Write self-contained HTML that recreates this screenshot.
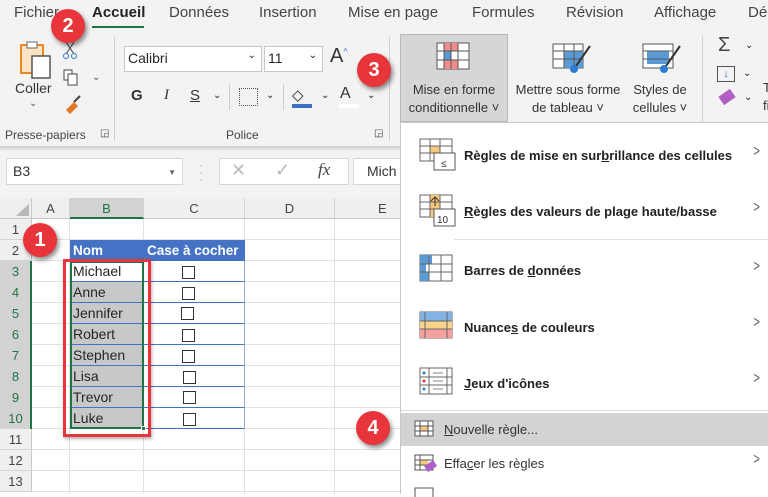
<!DOCTYPE html>
<html><head><meta charset="utf-8"><style>
*{margin:0;padding:0;box-sizing:border-box}
body{width:768px;height:494px;overflow:hidden;background:#fff;font-family:"Liberation Sans",sans-serif;position:relative;color:#262626}
.a{position:absolute}
.tab{position:absolute;top:4px;font-size:15px;color:#444}
.rib{position:absolute;left:0;top:28px;width:768px;height:118px;background:#f3f3f3}
.lbl{position:absolute;font-size:12px;color:#444}
.badge{position:absolute;width:34px;height:34px;border-radius:50%;background:#e8343b;color:#fff;font-weight:bold;font-size:20px;text-align:center;line-height:34px;box-shadow:2px 3px 5px rgba(0,0,0,.45)}
.ch{position:absolute;top:198px;height:21px;background:#efefef;border-right:1px solid #d4d4d4;border-bottom:1px solid #c8c8c8;font-size:13px;color:#444;text-align:center;line-height:21px}
.rh{position:absolute;left:0;width:32px;height:21px;background:#efefef;border-bottom:1px solid #d4d4d4;border-right:1px solid #c8c8c8;font-size:13px;color:#444;text-align:center;line-height:21px}
.cell{position:absolute;height:21px;font-size:14px;line-height:21px;padding-left:3px}
.cb{position:absolute;width:13px;height:13px;border:1px solid #333;background:#fff}
.mi{position:absolute;left:464px;font-size:13px;font-weight:bold;color:#222}
.arr{position:absolute;left:752px;font-size:16px;color:#666;transform:scaleX(.7)}
</style></head><body>
<div class="a" style="left:0;top:0;width:768px;height:28px;background:#f3f3f3"></div>
<div class="tab" style="left:14px">Fichier</div>
<div class="tab" style="left:92px;color:#222;font-weight:bold">Accueil</div>
<div class="a" style="left:92px;top:26px;width:52px;height:3px;background:#217346"></div>
<div class="tab" style="left:169px">Données</div>
<div class="tab" style="left:259px">Insertion</div>
<div class="tab" style="left:348px">Mise en page</div>
<div class="tab" style="left:472px">Formules</div>
<div class="tab" style="left:566px">Révision</div>
<div class="tab" style="left:654px">Affichage</div>
<div class="tab" style="left:748px">Dé</div>

<div class="rib"></div>
<div class="a" style="left:0;top:146px;width:768px;height:4px;background:linear-gradient(#ccc,#e8e8e8)"></div>
<svg class="a" style="left:18px;top:40px" width="38" height="40"><rect x="3" y="5" width="22" height="28" fill="#fbe3c4" stroke="#e48b26" stroke-width="2"/><rect x="9" y="2" width="10" height="6" fill="#fff" stroke="#666"/><rect x="14" y="16" width="18" height="22" fill="#fff" stroke="#555" stroke-width="1.5"/></svg>
<div class="a" style="left:15px;top:80px;font-size:14px;color:#333">Coller</div>
<div class="a" style="left:29px;top:98px;font-size:10px;color:#555">⌄</div>
<svg class="a" style="left:60px;top:40px" width="30" height="80"><path d="M6 2 L14 14 M14 2 L6 14" stroke="#444" fill="none"/><circle cx="6" cy="16" r="2.5" stroke="#2b7cd3" fill="none"/><circle cx="14" cy="16" r="2.5" stroke="#2b7cd3" fill="none"/><rect x="4" y="30" width="8" height="10" fill="#fff" stroke="#444"/><rect x="8" y="34" width="9" height="11" fill="#fff" stroke="#444"/><path d="M6 70 L14 62 L18 66 L10 74Z" fill="#e87722"/><path d="M14 62 L20 56" stroke="#444" stroke-width="2"/></svg>
<div class="a" style="left:92px;top:72px;font-size:10px;color:#555">⌄</div>
<div class="lbl" style="left:5px;top:128px">Presse-papiers</div>
<div class="lbl" style="left:100px;top:128px;font-size:10px">◲</div>
<div class="a" style="left:114px;top:36px;width:1px;height:105px;background:#d0d0d0"></div>
<div class="a" style="left:124px;top:46px;width:138px;height:26px;background:#fff;border:1px solid #c8c8c8;font-size:14px;padding:3px 3px">Calibri<span style="position:absolute;right:5px;font-size:10px">⌄</span></div>
<div class="a" style="left:264px;top:46px;width:59px;height:26px;background:#fff;border:1px solid #c8c8c8;font-size:14px;padding:3px 3px">11<span style="position:absolute;right:5px;font-size:10px">⌄</span></div>
<div class="a" style="left:330px;top:45px;font-size:20px;color:#333">A<sup style="font-size:9px;color:#2b7cd3">^</sup></div>
<div class="a" style="left:131px;top:87px;font-size:15px;font-weight:bold;color:#333">G</div>
<div class="a" style="left:164px;top:87px;font-size:15px;font-style:italic;font-family:'Liberation Serif';color:#333">I</div>
<div class="a" style="left:190px;top:87px;font-size:15px;text-decoration:underline;color:#333">S</div>
<div class="a" style="left:213px;top:90px;font-size:10px">⌄</div>
<div class="a" style="left:229px;top:84px;width:1px;height:26px;background:#ccc"></div>
<div class="a" style="left:239px;top:88px;width:19px;height:18px;border:1px dotted #555"></div>
<div class="a" style="left:266px;top:90px;font-size:10px">⌄</div>
<div class="a" style="left:283px;top:84px;width:1px;height:26px;background:#ccc"></div>
<div class="a" style="left:292px;top:86px;font-size:15px">◇</div>
<div class="a" style="left:292px;top:104px;width:20px;height:4px;background:#3b6fc4"></div>
<div class="a" style="left:321px;top:90px;font-size:10px">⌄</div>
<div class="a" style="left:340px;top:85px;font-size:16px;color:#333">A</div>
<div class="a" style="left:339px;top:104px;width:20px;height:4px;background:#fff"></div>
<div class="a" style="left:367px;top:90px;font-size:10px">⌄</div>
<div class="lbl" style="left:226px;top:128px">Police</div>
<div class="lbl" style="left:374px;top:128px;font-size:10px">◲</div>
<div class="a" style="left:389px;top:36px;width:1px;height:105px;background:#d0d0d0"></div>
<div class="a" style="left:400px;top:34px;width:108px;height:88px;background:#d6d6d6;border:1px solid #b8b8b8"></div>
<svg class="a" style="left:436px;top:42px" width="36" height="30"><rect x="1" y="1" width="32" height="26" fill="#fff" stroke="#555"/><rect x="8" y="1" width="14" height="8" fill="#f28b8b"/><rect x="8" y="9" width="7" height="9" fill="#5b9bd5"/><rect x="8" y="18" width="14" height="9" fill="#f28b8b"/><path d="M1 9H33M1 18H33M8 1V27M15 1V27M22 1V27" stroke="#555" fill="none"/></svg>
<div class="a" style="left:403px;top:81px;width:102px;text-align:center;font-size:13px;color:#333;line-height:18px">Mise en forme<br>conditionnelle ˅</div>
<svg class="a" style="left:552px;top:42px" width="40" height="34"><rect x="1" y="2" width="30" height="24" fill="#fff" stroke="#555"/><rect x="12" y="9" width="19" height="17" fill="#5b9bd5"/><path d="M1 9H31M1 17H31M12 2V26M22 2V26" stroke="#555" fill="none"/><path d="M38 4 L24 24" stroke="#333" stroke-width="2"/><circle cx="22" cy="27" r="4" fill="#2b7cd3"/></svg>
<div class="a" style="left:508px;top:81px;width:120px;text-align:center;font-size:13px;color:#333;line-height:18px">Mettre sous forme<br>de tableau ˅</div>
<svg class="a" style="left:642px;top:42px" width="40" height="34"><rect x="1" y="2" width="30" height="24" fill="#fff" stroke="#555"/><rect x="5" y="9" width="22" height="13" fill="#5b9bd5"/><path d="M1 9H31M1 17H31" stroke="#555" fill="none"/><path d="M38 4 L24 24" stroke="#333" stroke-width="2"/><circle cx="22" cy="27" r="4" fill="#2b7cd3"/></svg>
<div class="a" style="left:630px;top:81px;width:60px;text-align:center;font-size:13px;color:#333;line-height:18px">Styles de<br>cellules ˅</div>
<div class="a" style="left:702px;top:36px;width:1px;height:86px;background:#d0d0d0"></div>
<div class="a" style="left:718px;top:34px;font-size:20px;color:#444">Σ</div>
<div class="a" style="left:745px;top:40px;font-size:10px">⌄</div>
<div class="a" style="left:717px;top:66px;width:18px;height:16px;border:1.5px solid #555;color:#2b7cd3;font-size:11px;text-align:center;line-height:14px">↓</div>
<div class="a" style="left:743px;top:68px;font-size:10px">⌄</div>
<div class="a" style="left:720px;top:92px;width:14px;height:10px;background:#b25ec7;transform:rotate(-35deg)"></div>
<div class="a" style="left:744px;top:92px;font-size:10px">⌄</div>
<div class="a" style="left:763px;top:80px;font-size:13px;color:#333">T</div>
<div class="a" style="left:763px;top:98px;font-size:13px;color:#333">fi</div>

<div class="a" style="left:0;top:150px;width:768px;height:48px;background:#f3f3f3"></div>
<div class="a" style="left:6px;top:158px;width:177px;height:27px;background:#fff;border:1px solid #d6d6d6;font-size:14px;padding:4px 6px;color:#333">B3<span style="position:absolute;right:6px;font-size:8px;color:#666;top:9px">▼</span></div>
<div class="a" style="left:199px;top:162px;font-size:12px;color:#aaa;line-height:7px">·<br>·<br>·</div>
<div class="a" style="left:219px;top:158px;width:130px;height:27px;background:#fff;border:1px solid #d6d6d6"></div>
<div class="a" style="left:231px;top:160px;font-size:18px;color:#bbb">✕</div>
<div class="a" style="left:275px;top:160px;font-size:18px;color:#bbb">✓</div>
<div class="a" style="left:318px;top:160px;font-size:17px;font-style:italic;font-family:'Liberation Serif';color:#444">fx</div>
<div class="a" style="left:353px;top:158px;width:60px;height:27px;background:#fff;border:1px solid #d6d6d6;font-size:14px;padding:4px 13px;color:#333">Mich</div>

<div class="a" style="left:0;top:198px;width:32px;height:21px;background:#efefef;border-right:1px solid #c8c8c8;border-bottom:1px solid #c8c8c8"></div>
<svg class="a" style="left:14px;top:203px" width="16" height="14"><path d="M15 1V13H2Z" fill="#b8b8b8"/></svg>
<div class="ch" style="left:32px;width:38px">A</div>
<div class="ch" style="left:70px;width:74px;background:#d2d2d2;color:#217346;border-bottom:2px solid #217346">B</div>
<div class="ch" style="left:144px;width:101px">C</div>
<div class="ch" style="left:245px;width:90px">D</div>
<div class="ch" style="left:335px;width:433px;text-align:left;padding-left:43px">E</div>
<div class="a" style="left:32px;top:219px;width:736px;height:275px;background:repeating-linear-gradient(to bottom,transparent 0 20px,#e1e1e1 20px 21px)"></div>
<div class="a" style="left:69px;top:219px;width:1px;height:275px;background:#e1e1e1"></div>
<div class="a" style="left:143px;top:219px;width:1px;height:275px;background:#e1e1e1"></div>
<div class="a" style="left:244px;top:219px;width:1px;height:275px;background:#e1e1e1"></div>
<div class="a" style="left:334px;top:219px;width:1px;height:275px;background:#e1e1e1"></div>
<div class="rh" style="top:219px">1</div>
<div class="rh" style="top:240px">2</div>
<div class="rh" style="top:261px;background:#d2d2d2;color:#217346">3</div>
<div class="rh" style="top:282px;background:#d2d2d2;color:#217346">4</div>
<div class="rh" style="top:303px;background:#d2d2d2;color:#217346">5</div>
<div class="rh" style="top:324px;background:#d2d2d2;color:#217346">6</div>
<div class="rh" style="top:345px;background:#d2d2d2;color:#217346">7</div>
<div class="rh" style="top:366px;background:#d2d2d2;color:#217346">8</div>
<div class="rh" style="top:387px;background:#d2d2d2;color:#217346">9</div>
<div class="rh" style="top:408px;background:#d2d2d2;color:#217346">10</div>
<div class="rh" style="top:429px">11</div>
<div class="rh" style="top:450px">12</div>
<div class="rh" style="top:471px">13</div>
<div class="a" style="left:30px;top:261px;width:2px;height:168px;background:#217346"></div>
<div class="cell" style="left:70px;top:240px;width:175px;background:#4472c4;color:#fff;font-weight:bold;font-size:13.5px">Nom<span style="position:absolute;left:77px">Case à cocher</span></div>
<div class="a" style="left:70px;top:261px;width:175px;height:168px;background:repeating-linear-gradient(to bottom,transparent 0 20px,#4472c4 20px 21px);border-right:1px solid #8eaadb"></div>
<div class="a" style="left:70px;top:282px;width:74px;height:147px;background:repeating-linear-gradient(to bottom,#c8c8c8 0 20px,#4472c4 20px 21px)"></div>
<div class="cell" style="left:70px;top:261px">Michael</div>
<div class="cell" style="left:70px;top:282px">Anne</div>
<div class="cell" style="left:70px;top:303px">Jennifer</div>
<div class="cell" style="left:70px;top:324px">Robert</div>
<div class="cell" style="left:70px;top:345px">Stephen</div>
<div class="cell" style="left:70px;top:366px">Lisa</div>
<div class="cell" style="left:70px;top:387px">Trevor</div>
<div class="cell" style="left:70px;top:408px">Luke</div>
<div class="a" style="left:70px;top:261px;width:74px;height:168px;border:2px solid #217346"></div>
<div class="a" style="left:141px;top:426px;width:5px;height:5px;background:#217346;border:1px solid #fff"></div>
<div class="a" style="left:63px;top:259px;width:88px;height:178px;border:3px solid #e8343b;box-shadow:1px 2px 3px rgba(0,0,0,.3)"></div>
<div class="cb" style="left:182px;top:266px"></div>
<div class="cb" style="left:182px;top:287px"></div>
<div class="cb" style="left:181px;top:307px"></div>
<div class="cb" style="left:182px;top:329px"></div>
<div class="cb" style="left:182px;top:350px"></div>
<div class="cb" style="left:183px;top:371px"></div>
<div class="cb" style="left:183px;top:391px"></div>
<div class="cb" style="left:183px;top:413px"></div>

<div class="a" style="left:400px;top:122px;width:368px;height:372px;background:#fff;border-left:1px solid #c8c8c8;border-top:1px solid #c8c8c8"></div>
<svg class="a" style="left:419px;top:138px" width="40" height="34"><rect x="1" y="1" width="32" height="22" fill="#fff" stroke="#666"/><rect x="11" y="8" width="10" height="7" fill="#f7c77c"/><path d="M1 8H33M1 15H33M11 1V23M21 1V23" stroke="#666" fill="none"/><rect x="15" y="15" width="21" height="17" fill="#fff" stroke="#555"/><text x="22" y="29" font-size="10" fill="#333" font-family="Liberation Sans">≤</text></svg>
<div class="mi" style="top:148px">Règles de mise en sur<u>b</u>rillance des cellules</div>
<div class="arr" style="top:143px">&gt;</div>
<svg class="a" style="left:419px;top:194px" width="40" height="34"><rect x="1" y="1" width="32" height="22" fill="#fff" stroke="#666"/><rect x="11" y="1" width="10" height="22" fill="#f7c77c"/><path d="M1 8H33M1 15H33M11 1V23M21 1V23" stroke="#666" fill="none"/><path d="M16 12V3M12 7L16 3L20 7" stroke="#333" fill="none"/><rect x="15" y="15" width="21" height="17" fill="#fff" stroke="#555"/><text x="18" y="29" font-size="10" fill="#333" font-family="Liberation Sans">10</text></svg>
<div class="mi" style="top:204px"><u>R</u>ègles des valeurs de plage haute/basse</div>
<div class="arr" style="top:199px">&gt;</div>
<div class="a" style="left:454px;top:239px;width:314px;height:1px;background:#e0e0e0"></div>
<svg class="a" style="left:419px;top:254px" width="40" height="30"><rect x="1" y="1" width="32" height="26" fill="#fff" stroke="#666"/><rect x="1" y="1" width="12" height="9" fill="#5b9bd5"/><rect x="1" y="10" width="6" height="8" fill="#5b9bd5"/><rect x="1" y="18" width="9" height="9" fill="#5b9bd5"/><path d="M1 10H33M1 18H33M10 1V27M22 1V27" stroke="#666" fill="none"/></svg>
<div class="mi" style="top:263px">Barres de <u>d</u>onnées</div>
<div class="arr" style="top:258px">&gt;</div>
<svg class="a" style="left:419px;top:311px" width="40" height="30"><rect x="1" y="1" width="32" height="26" fill="#fff" stroke="#666"/><rect x="1" y="1" width="32" height="9" fill="#82b3e4"/><rect x="1" y="10" width="32" height="8" fill="#f9d58a"/><rect x="1" y="18" width="32" height="9" fill="#f4a0a0"/><path d="M1 10H33M1 18H33M6 1V27M28 1V27" stroke="#666" fill="none"/></svg>
<div class="mi" style="top:320px">Nuance<u>s</u> de couleurs</div>
<div class="arr" style="top:314px">&gt;</div>
<svg class="a" style="left:419px;top:367px" width="40" height="30"><rect x="1" y="1" width="32" height="26" fill="#fff" stroke="#666"/><path d="M1 10H33M1 18H33M10 1V27M28 1V27" stroke="#666" fill="none"/><circle cx="5" cy="6" r="1.5" fill="#2b7cd3"/><circle cx="5" cy="14" r="1.5" fill="#e8343b"/><circle cx="5" cy="22" r="1.5" fill="#2b7cd3"/><path d="M14 6H24M14 14H24M14 22H24" stroke="#888"/></svg>
<div class="mi" style="top:376px"><u>J</u>eux d'icônes</div>
<div class="arr" style="top:370px">&gt;</div>
<div class="a" style="left:401px;top:410px;width:367px;height:1px;background:#d8d8d8"></div>
<div class="a" style="left:401px;top:413px;width:367px;height:33px;background:#d3d3d3"></div>
<svg class="a" style="left:414px;top:420px" width="22" height="18"><rect x="1" y="1" width="18" height="15" fill="#fff" stroke="#555"/><rect x="6" y="6" width="8" height="5" fill="#f7c77c"/><path d="M1 6H19M1 11H19M6 1V16M14 1V16" stroke="#555" fill="none"/></svg>
<div class="a" style="left:444px;top:422px;font-size:13px;color:#333"><u>N</u>ouvelle règle...</div>
<svg class="a" style="left:414px;top:454px" width="24" height="20"><rect x="1" y="1" width="18" height="15" fill="#fff" stroke="#555"/><rect x="6" y="6" width="8" height="5" fill="#f7c77c"/><path d="M1 6H19M1 11H19M6 1V16" stroke="#555" fill="none"/><rect x="11" y="9" width="11" height="7" fill="#b25ec7" transform="rotate(-35 16 12)"/></svg>
<div class="a" style="left:444px;top:456px;font-size:13px;color:#333">Effa<u>c</u>er les règles</div>
<div class="arr" style="top:451px">&gt;</div>
<svg class="a" style="left:414px;top:487px" width="22" height="10"><rect x="1" y="1" width="18" height="12" fill="#fff" stroke="#555"/></svg>

<div class="badge" style="left:23px;top:223px">1</div>
<div class="badge" style="left:51px;top:9px">2</div>
<div class="badge" style="left:357px;top:53px">3</div>
<div class="badge" style="left:356px;top:411px">4</div>
</body></html>
